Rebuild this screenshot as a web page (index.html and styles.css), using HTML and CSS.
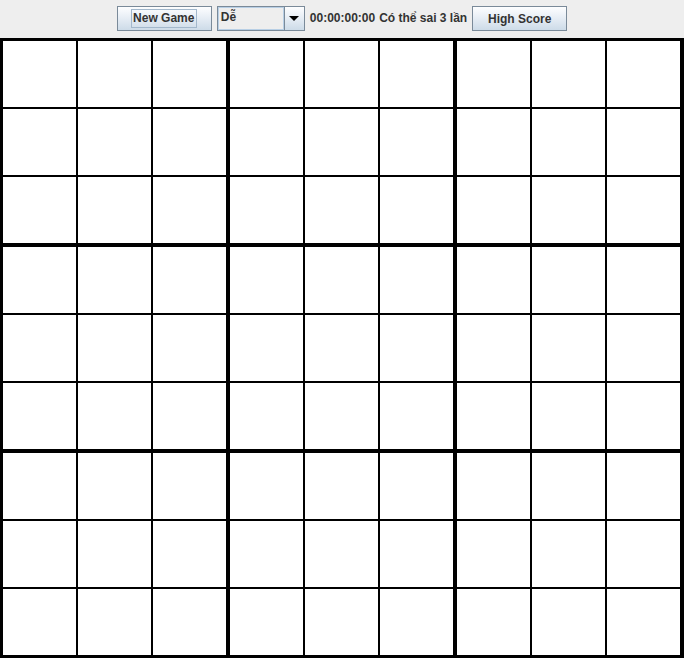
FILE: index.html
```html
<!DOCTYPE html>
<html lang="vi">
<head>
<meta charset="utf-8">
<title>Sudoku</title>
<link rel="stylesheet" href="styles.css">
</head>
<body>
<div class="toolbar">
  <button class="btn"><span class="focus">New Game</span></button>
  <div class="combo">
    <div class="combo-field">Dễ</div>
    <div class="combo-arrow"><span class="tri"></span></div>
  </div>
  <span class="label">00:00:00:00</span>
  <span class="label">Có thể sai 3 lần</span>
  <button class="btn">High Score</button>
</div>
<div class="board">
  <div class="box"><div class="cell"></div><div class="cell"></div><div class="cell"></div><div class="cell"></div><div class="cell"></div><div class="cell"></div><div class="cell"></div><div class="cell"></div><div class="cell"></div></div>
  <div class="box"><div class="cell"></div><div class="cell"></div><div class="cell"></div><div class="cell"></div><div class="cell"></div><div class="cell"></div><div class="cell"></div><div class="cell"></div><div class="cell"></div></div>
  <div class="box"><div class="cell"></div><div class="cell"></div><div class="cell"></div><div class="cell"></div><div class="cell"></div><div class="cell"></div><div class="cell"></div><div class="cell"></div><div class="cell"></div></div>
  <div class="box"><div class="cell"></div><div class="cell"></div><div class="cell"></div><div class="cell"></div><div class="cell"></div><div class="cell"></div><div class="cell"></div><div class="cell"></div><div class="cell"></div></div>
  <div class="box"><div class="cell"></div><div class="cell"></div><div class="cell"></div><div class="cell"></div><div class="cell"></div><div class="cell"></div><div class="cell"></div><div class="cell"></div><div class="cell"></div></div>
  <div class="box"><div class="cell"></div><div class="cell"></div><div class="cell"></div><div class="cell"></div><div class="cell"></div><div class="cell"></div><div class="cell"></div><div class="cell"></div><div class="cell"></div></div>
  <div class="box"><div class="cell"></div><div class="cell"></div><div class="cell"></div><div class="cell"></div><div class="cell"></div><div class="cell"></div><div class="cell"></div><div class="cell"></div><div class="cell"></div></div>
  <div class="box"><div class="cell"></div><div class="cell"></div><div class="cell"></div><div class="cell"></div><div class="cell"></div><div class="cell"></div><div class="cell"></div><div class="cell"></div><div class="cell"></div></div>
  <div class="box"><div class="cell"></div><div class="cell"></div><div class="cell"></div><div class="cell"></div><div class="cell"></div><div class="cell"></div><div class="cell"></div><div class="cell"></div><div class="cell"></div></div>
</div>
</body>
</html>
```
FILE: styles.css
```css
html {
  background: #ffffff;
}
body {
  margin: 0;
  font-family: "Liberation Sans", Arial, sans-serif;
  font-size: 12px;
  font-weight: bold;
  color: #333333;
}
.toolbar {
  height: 38px;
  box-sizing: border-box;
  background: #eeeeee;
  padding-top: 6px;
  display: flex;
  justify-content: center;
  align-items: flex-start;
  gap: 5px;
}
.btn {
  width: 95px;
  height: 25px;
  box-sizing: border-box;
  border: 1px solid #7a8a99;
  background: linear-gradient(#fdfeff, #e3ebf3 55%, #cddbe8);
  font-family: inherit;
  font-size: 12px;
  font-weight: bold;
  color: #333333;
  padding: 0;
  display: flex;
  align-items: center;
  justify-content: center;
}
.focus {
  border: 1px solid #a3b8cc;
  padding: 1px 2px 2px 1px;
  line-height: 14px;
}
.combo {
  width: 88px;
  height: 25px;
  box-sizing: border-box;
  border: 1px solid #7a8a99;
  display: flex;
  background: #eeeeee;
}
.combo-field {
  flex: 1;
  border: 1px solid #b8cfe5;
  padding-left: 2px;
  line-height: 19px;
  background: #eeeeee;
}
.combo-arrow {
  width: 19px;
  border-left: 1px solid #7a8a99;
  background: linear-gradient(#fdfeff, #e3ebf3 55%, #cddbe8);
  display: flex;
  align-items: center;
  justify-content: center;
}
.tri {
  width: 0;
  height: 0;
  border-left: 5px solid transparent;
  border-right: 5px solid transparent;
  border-top: 5px solid #000000;
}
.label {
  line-height: 25px;
  white-space: nowrap;
}
.label + .label {
  margin-left: -1px;
}
.board {
  width: 684px;
  height: 620px;
  box-sizing: border-box;
  background: #000000;
  padding: 3px 4px 3px 3px;
  display: grid;
  grid-template-columns: repeat(3, 1fr);
  grid-template-rows: repeat(3, 1fr);
  gap: 4px;
}
.box {
  display: grid;
  grid-template-columns: repeat(3, 1fr);
  grid-template-rows: repeat(3, 1fr);
  gap: 2px;
}
.cell {
  background: #ffffff;
}
```
